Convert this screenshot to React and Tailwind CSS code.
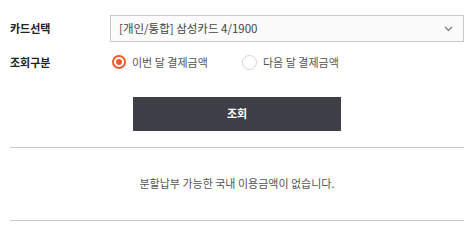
import React from "react";

function Radio({ checked, label }) {
  return (
    <label className="flex items-center gap-[6px] cursor-pointer">
      {checked ? (
        <span className="w-[14px] h-[14px] rounded-full border-[2px] border-[#f05a28] flex items-center justify-center bg-white">
          <span className="w-[6px] h-[6px] rounded-full bg-[#f05a28]" />
        </span>
      ) : (
        <span className="w-[15px] h-[15px] rounded-full border border-[#d4d4d4] bg-white" />
      )}
      <span className="text-[11px] text-[#555]">{label}</span>
    </label>
  );
}

export default function App() {
  return (
    <div
      className="w-[474px] h-[226px] bg-white px-[10px] pt-[15px]"
      style={{ fontFamily: '"Noto Sans CJK KR", "Noto Sans", sans-serif' }}
    >
      <div className="flex items-center">
        <div className="w-[100px] text-[11px] font-bold text-[#222]">카드선택</div>
        <div className="flex-1 h-[27px] border border-[#c9c9c9] bg-[#fbfbfb] flex items-center justify-between pl-[8px] pr-[10px]">
          <span className="text-[11.5px] text-[#444]">[개인/통합] 삼성카드 4/1900</span>
          <svg width="9" height="6" viewBox="0 0 9 6" fill="none">
            <path d="M1 1l3.5 3.5L8 1" stroke="#777" strokeWidth="1.2" />
          </svg>
        </div>
      </div>
      <div className="flex items-center mt-[12px]">
        <div className="w-[100px] text-[11px] font-bold text-[#222]">조회구분</div>
        <div className="flex items-center pl-[2px]">
          <div className="w-[130px]">
            <Radio checked label="이번 달 결제금액" />
          </div>
          <Radio label="다음 달 결제금액" />
        </div>
      </div>
      <div className="flex justify-center mt-[26px]">
        <button className="w-[208px] h-[34px] bg-[#3e3f47] text-white text-[11px] font-bold">
          조회
        </button>
      </div>
      <div className="mt-[16px] border-t border-[#c8c8c8]" />
      <div className="h-[72px] flex items-center justify-center text-[11px] text-[#555]">
        분할납부 가능한 국내 이용금액이 없습니다.
      </div>
      <div className="border-t border-[#c8c8c8]" />
    </div>
  );
}
